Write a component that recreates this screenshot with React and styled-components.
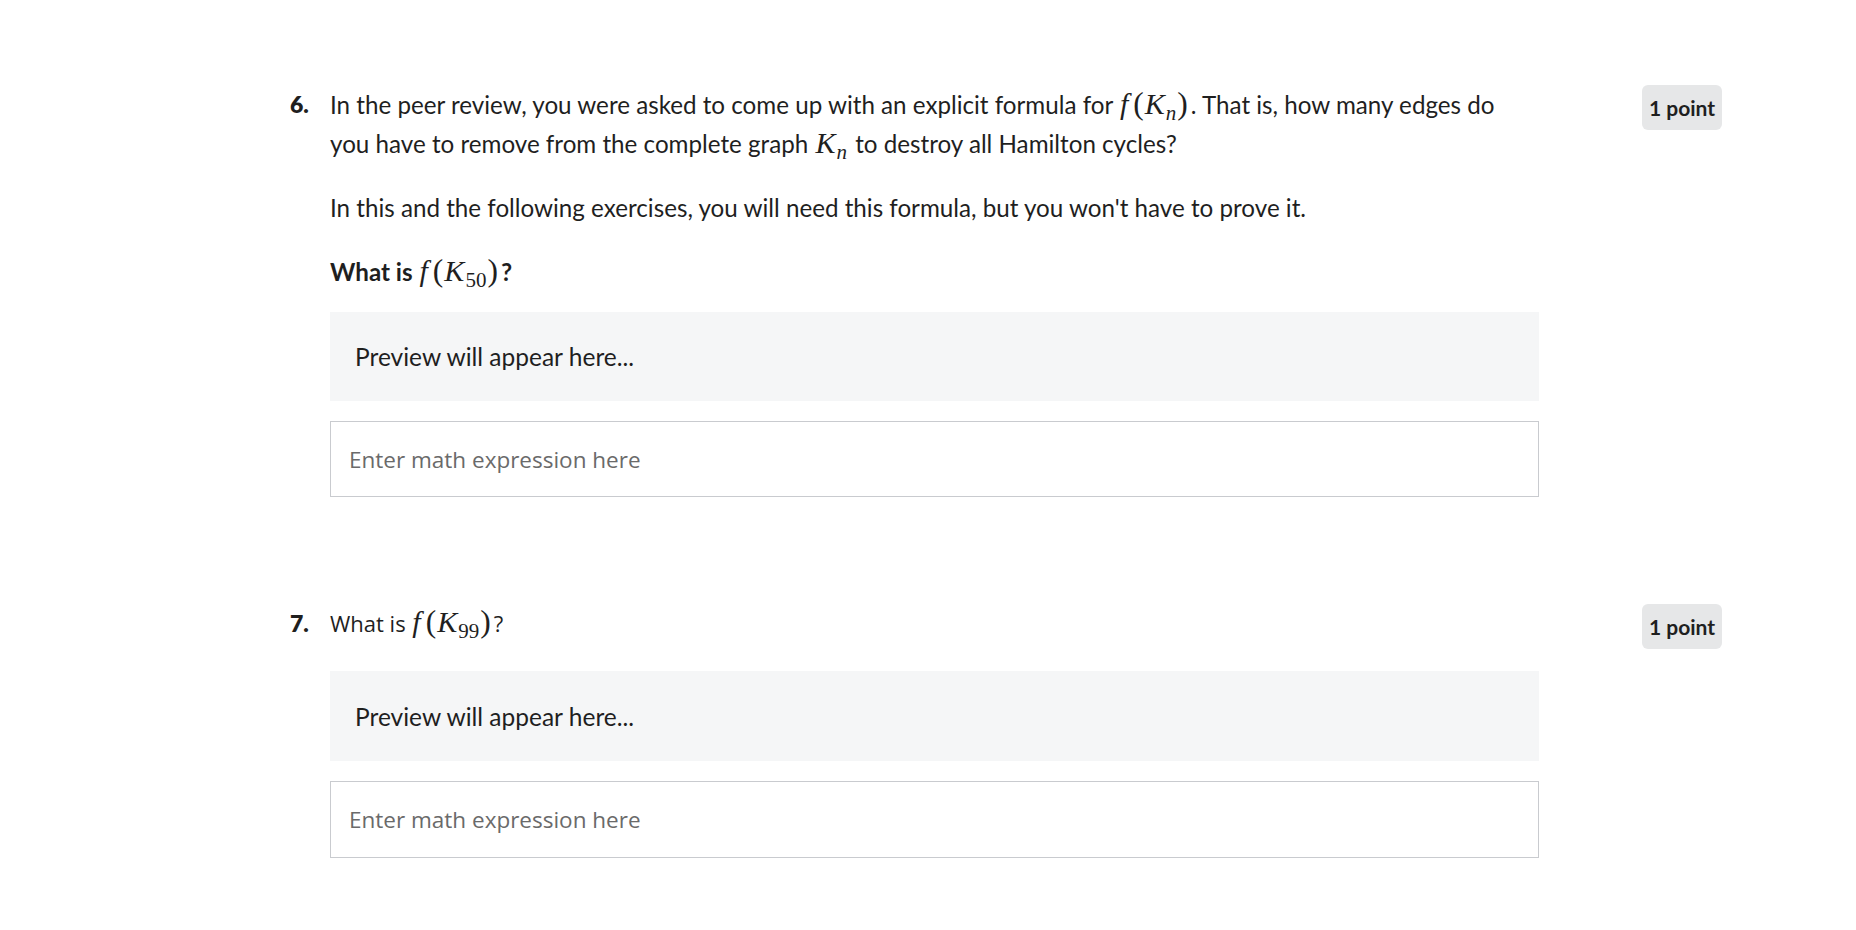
import React from "react";
import styled, { createGlobalStyle } from "styled-components";

const Global = createGlobalStyle`
  html, body { margin: 0; padding: 0; background: #ffffff; }
  body { font-family: Lato, "Noto Sans", sans-serif; color: #1f1f1f; }
  * { box-sizing: border-box; }
`;

const Page = styled.main`
  padding: 85px 0 60px 290px;
  width: 1722px;
  display: flex;
  flex-direction: column;
  gap: 107px;
`;

const Question = styled.section`
  display: flex;
  align-items: flex-start;
`;

const Number = styled.div`
  width: 40px;
  flex: none;
  font-weight: 800;
  font-size: 23px;
  line-height: 39px;
`;

const Body = styled.div`
  width: 1209px;
  flex: none;
`;

const Spacer = styled.div`
  flex: 1;
`;

const Badge = styled.div`
  flex: none;
  width: 80px;
  height: 45px;
  border-radius: 6px;
  background: #e6e7e8;
  display: flex;
  align-items: center;
  justify-content: center;
  font-weight: 700;
  font-size: 21px;
  color: #1f1f1f;
`;

const Para = styled.p`
  margin: ${(p) => p.$mt || 0}px 0 0 0;
  line-height: 39px;
  font-weight: ${(p) => (p.$bold ? 700 : 400)};
  font-family: ${(p) => (p.$alt ? '"Open Sans", sans-serif' : 'Lato, sans-serif')};
  font-size: ${(p) => (p.$alt ? 22 : 24.2)}px;
`;

const MathSpan = styled.span`
  font-family: "Liberation Serif", "DejaVu Serif", serif;
  font-size: 30px;
  line-height: 0;
  font-weight: 400;
  white-space: nowrap;
  margin: 0 2px 0 1px;
`;

const Var = styled.i`
  font-style: italic;
  padding-right: ${(p) => p.$pr || 0}px;
`;

const Paren = styled.span`
  font-style: normal;
  font-size: 1.05em;
  padding: 0 1px;
`;

const Sub = styled.span`
  font-size: 0.7em;
  position: relative;
  top: 0.3em;
  margin-left: 1px;
  font-style: ${(p) => (p.$italic ? "italic" : "normal")};
`;

const Preview = styled.div`
  margin-top: ${(p) => p.$mt || 22}px;
  height: ${(p) => p.$h || 89}px;
  background: #f5f6f7;
  display: flex;
  align-items: center;
  padding-left: 25px;
  font-size: 24.5px;
  color: #1f1f1f;
`;

const MathInput = styled.input`
  display: block;
  margin-top: 20px;
  width: 100%;
  height: ${(p) => p.$h || 76}px;
  border: 1px solid #c9cbcf;
  border-radius: 0;
  padding: 0 18px;
  font-family: "Open Sans", sans-serif;
  font-size: 22.5px;
  color: #1f1f1f;
  background: #ffffff;
  outline: none;
  &::placeholder { color: #6a6a6a; }
`;

function F({ sub, italicSub }) {
  return (
    <MathSpan>
      <Var $pr={4}>f</Var>
      <Paren>(</Paren>
      <Var>K</Var>
      <Sub $italic={italicSub}>{sub}</Sub>
      <Paren>)</Paren>
    </MathSpan>
  );
}

function Kn() {
  return (
    <MathSpan>
      <Var>K</Var>
      <Sub $italic>n</Sub>
    </MathSpan>
  );
}

export default function App() {
  return (
    <>
      <Global />
      <Page>
        <Question>
          <Number>6.</Number>
          <Body>
            <Para>
              In the peer review, you were asked to come up with an explicit formula for <F sub="n" italicSub />. That is, how many edges do you have to remove from the complete graph <Kn /> to destroy all Hamilton cycles?
            </Para>
            <Para $mt={25}>
              In this and the following exercises, you will need this formula, but you won't have to prove it.
            </Para>
            <Para $mt={25} $bold>
              What is <F sub="50" />?
            </Para>
            <Preview $mt={21}>Preview will appear here...</Preview>
            <MathInput placeholder="Enter math expression here" />
          </Body>
          <Spacer />
          <Badge>1 point</Badge>
        </Question>
        <Question>
          <Number>7.</Number>
          <Body>
            <Para $alt>
              What is <F sub="99" />?
            </Para>
            <Preview $mt={28} $h={90}>Preview will appear here...</Preview>
            <MathInput $h={77} placeholder="Enter math expression here" />
          </Body>
          <Spacer />
          <Badge>1 point</Badge>
        </Question>
      </Page>
    </>
  );
}
